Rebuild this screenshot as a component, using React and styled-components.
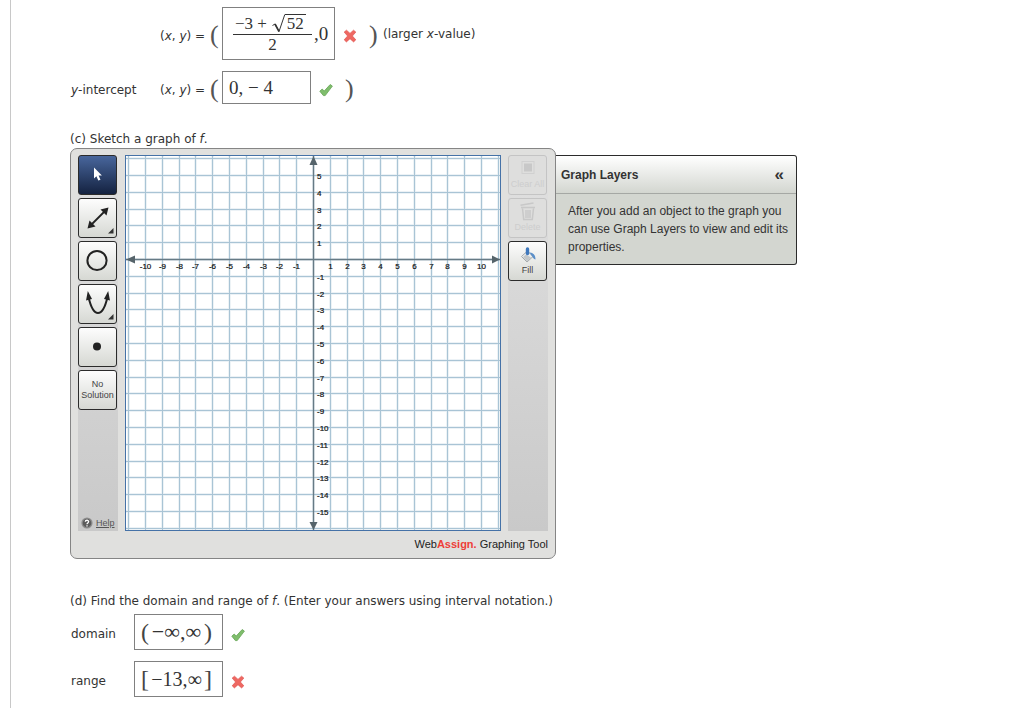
import { useState } from 'react';
import styled, { createGlobalStyle } from 'styled-components';

const GlobalStyle = createGlobalStyle`
  * {
    box-sizing: border-box;
  }

  body {
    margin: 0;
    background: #fff;
    color: #333;
    font-family: 'DejaVu Sans', sans-serif;
    font-size: 12px;
  }
`;

const Page = styled.main`
  min-height: 100vh;
  margin-left: 10px;
  padding: 7px 16px 0 59px;
  border-left: 1px solid #c8c8c8;
`;

const AnswerRow = styled.div`
  display: flex;
  align-items: center;
  padding-left: 1px;
  margin-bottom: ${(props) => props.$gap || 11}px;
`;

const RowLabel = styled.label`
  width: ${(props) => props.$width || 63}px;
  margin-top: 4px;
  flex-shrink: 0;
`;

const Expression = styled.span`
  width: 50px;
  margin-top: 5px;
  flex-shrink: 0;
  white-space: nowrap;
`;

const Paren = styled.span`
  width: 8px;
  margin: 2px 4px 0 0;
  color: #555;
  font-family: 'Liberation Serif', serif;
  font-size: 26px;
  line-height: 30px;
`;

const ClosingParen = styled(Paren)`
  margin: 2px 6px 0 12px;
`;

const MathBox = styled.div`
  display: flex;
  align-items: center;
  justify-content: center;
  width: ${(props) => props.$width || 89}px;
  height: ${(props) => props.$height || 36}px;
  border: 1px solid #808080;
  font-family: 'Liberation Serif', serif;
  font-size: 19px;
`;

const InputBox = styled(MathBox)`
  padding: 0 10px 0 6px;
`;

const MathInput = styled.input`
  flex: 1;
  min-width: 0;
  padding: 0;
  border: 0;
  outline: none;
  background: transparent;
  color: #333;
  font-family: 'Liberation Serif', serif;
  font-size: ${(props) => props.$size || 19}px;
  line-height: 24px;
  text-align: ${(props) => props.$align || 'center'};
`;

const Bracket = styled.span`
  color: #444;
  font-size: 24px;
  line-height: 28px;
`;

const Fraction = styled.span`
  display: flex;
  flex-direction: column;
  align-items: center;
  width: 79px;
  margin: 0 2px 0 4px;
  font-size: 17px;
  line-height: 19px;
`;

const Numerator = styled.span`
  display: flex;
  align-items: center;
  width: 100%;
  padding: 0 0 1px 2px;
  border-bottom: 1px solid #333;
`;

const Radical = styled.svg`
  width: 14px;
  height: 19px;
  margin-left: 4px;
`;

const Radicand = styled.span`
  padding: 0 2px;
  border-top: 1px solid #333;
  line-height: 18px;
`;

const MarkIcon = styled.svg`
  width: 14px;
  height: 14px;
  margin: 5px 0 0 8px;
  flex-shrink: 0;
`;

const Heading = styled.p`
  margin: ${(props) => props.$top || 0}px 0 ${(props) => props.$bottom || 0}px;
  line-height: 18px;
`;

const ToolRow = styled.div`
  display: flex;
  align-items: flex-start;
`;

const Tool = styled.section`
  padding: 6px 7px;
  border: 1px solid #858585;
  border-radius: 7px;
  background: #e0e0de;
  font-family: 'Liberation Sans', sans-serif;
`;

const ToolBody = styled.div`
  display: flex;
  gap: 7px;
`;

const Strip = styled.div`
  display: flex;
  flex-direction: column;
  gap: 3px;
  width: 40px;
  background: linear-gradient(#e0e0e0, #c9c9c9);
`;

const ToolButton = styled.button`
  display: flex;
  flex-direction: column;
  align-items: center;
  justify-content: ${(props) => (props.$caption ? 'flex-end' : 'center')};
  width: 39px;
  height: 40px;
  padding: 0;
  border: 1px solid #2b2b2b;
  border-radius: 3px;
  background: ${(props) =>
    props.$active
      ? 'linear-gradient(#48669c, #142240)'
      : 'linear-gradient(#fdfdfd, #d6d8d3)'};
  color: #444;
  font-family: 'Liberation Sans', sans-serif;
  font-size: 9px;
  line-height: 11px;
  cursor: pointer;

  &:disabled {
    border-color: #c4c4c4;
    background: #dededd;
    color: #cdcdcd;
    cursor: default;
  }
`;

const ToolIcon = styled.svg`
  width: 37px;
  height: 38px;
  display: block;
`;

const CaptionIcon = styled.svg`
  width: 20px;
  height: 20px;
`;

const Caption = styled.span`
  margin-bottom: 4px;
  white-space: nowrap;
`;

const HelpLink = styled.a`
  display: flex;
  align-items: center;
  gap: 3px;
  margin-top: auto;
  padding: 0 0 2px 3px;
  color: #555;
  font-size: 9px;
`;

const Plot = styled.svg`
  display: block;
  width: 376px;
  height: 376px;
  border: 1px solid #4572a7;
  background: #fff;
`;

const ToolFooter = styled.footer`
  padding-top: 5px;
  color: #222;
  font-size: 11px;
  line-height: 16px;
  text-align: right;
`;

const BrandAccent = styled.strong`
  color: #ee3e38;
`;

const Layers = styled.aside`
  width: 241px;
  margin-top: 7px;
  border: 1px solid #2b2b2b;
  border-left: 0;
  border-radius: 0 3px 3px 0;
  background: #d3d6d0;
  font-family: 'Liberation Sans', sans-serif;
`;

const LayersHeader = styled.header`
  display: flex;
  align-items: center;
  justify-content: space-between;
  height: 38px;
  padding: 0 12px 0 5px;
  border-bottom: 1px solid #a5a8a4;
  border-radius: 0 3px 0 0;
  background: linear-gradient(#fff, #d3d6d0);
`;

const LayersTitle = styled.h2`
  margin: 0;
  font-size: 12px;
`;

const CollapseButton = styled.button`
  padding: 0;
  border: 0;
  background: none;
  color: #333;
  font-family: 'Liberation Sans', sans-serif;
  font-size: 17px;
  font-weight: bold;
  line-height: 20px;
  cursor: pointer;
`;

const LayersText = styled.p`
  margin: 0;
  padding: 8px 2px 8px 12px;
  font-size: 12px;
  line-height: 18px;
`;

// plot geometry
const UNIT = 16.8;
const ORIGIN_X = 187.5;
const ORIGIN_Y = 103.5;

const range = (from, to) =>
  Array.from({ length: to - from + 1 }, (_, i) => from + i);
const px = (x) => Math.round(ORIGIN_X + x * UNIT - 0.5) + 0.5;
const py = (y) => Math.round(ORIGIN_Y - y * UNIT - 0.5) + 0.5;

function Mark({ correct }) {
  return correct ? (
    <MarkIcon viewBox="0 0 14 14" role="img" aria-label="correct">
      <path
        d="M.8 8.2 3.2 6l2 2.1L11.2 1.5l2.2 1.6L6.2 12.6H4.4Z"
        fill="#7fbd6c"
        stroke="#65a554"
        strokeWidth="0.8"
        strokeLinejoin="round"
      />
    </MarkIcon>
  ) : (
    <MarkIcon viewBox="0 0 14 14" role="img" aria-label="incorrect">
      <path
        d="M1.2 3.1 3.5 1.2 7 4.4l3.5-3.2 2.3 1.9-3.4 3.9 3.4 3.8-2.2 2.1L7 9.7l-3.6 3.2-2.2-2.1L4.6 7Z"
        fill="#ee6862"
        stroke="#e0524e"
        strokeWidth="0.7"
        strokeLinejoin="round"
      />
    </MarkIcon>
  );
}

function XY() {
  return (
    <Expression>
      (<i>x</i>, <i>y</i>) =
    </Expression>
  );
}

function GridLines(props) {
  return (
    <g {...props}>
      {range(-11, 11).map((x) => (
        <line key={`x${x}`} x1={px(x)} x2={px(x)} y1="0" y2="374" />
      ))}
      {range(-16, 6).map((y) => (
        <line key={`y${y}`} x1="0" x2="374" y1={py(y)} y2={py(y)} />
      ))}
    </g>
  );
}

function Graph() {
  return (
    <Plot viewBox="0 0 374 374" role="img" aria-label="Coordinate plane">
      <GridLines stroke="#e6eef3" strokeWidth="2.4" />
      <GridLines stroke="#a9c4d5" strokeWidth="1" />
      <g stroke="#667a85" strokeWidth="1.4">
        <line x1={px(0)} x2={px(0)} y1="0" y2="374" />
        <line x1="0" x2="374" y1={py(0)} y2={py(0)} />
      </g>
      <g fill="#56646b">
        <path d={`M${px(0)} 0l4 9h-8Z`} />
        <path d={`M${px(0)} 374l4-8h-8Z`} />
        <path d={`M0 ${py(0)}l9-4v8Z`} />
        <path d={`M374 ${py(0)}l-8-4v8Z`} />
      </g>
      <g
        fill="#111"
        fontFamily="'Liberation Sans', sans-serif"
        fontSize="8"
        stroke="#111"
        strokeWidth="0.2"
      >
        {range(-10, 10)
          .filter((x) => x !== 0)
          .map((x) => (
            <text key={x} x={px(x)} y="113" textAnchor="middle">
              {x}
            </text>
          ))}
        {range(-15, 5)
          .filter((y) => y !== 0)
          .map((y) => (
            <text key={y} x="191" y={py(y) + 3}>
              {y}
            </text>
          ))}
      </g>
    </Plot>
  );
}

const corner = <path d="M34.5 29V34.5H29Z" fill="#333" />;

const drawTools = [
  {
    name: 'Select',
    icon: (
      <path
        d="M15 11.5v11l2.4-2.2 1.9 4.3 2.2-.9-1.9-4.3h3.3Z"
        fill="#fff"
      />
    ),
  },
  {
    name: 'Line',
    icon: (
      <>
        <path d="M12 26 26 12" stroke="#222" strokeWidth="1.8" />
        <path d="M8.5 29.5 10.5 21.5 16.5 27.5Z" fill="#222" />
        <path d="M29.5 8.5 21.5 10.5 27.5 16.5Z" fill="#222" />
        {corner}
      </>
    ),
  },
  {
    name: 'Circle',
    icon: (
      <circle cx="18" cy="18.5" r="9.6" fill="none" stroke="#222" strokeWidth="2" />
    ),
  },
  {
    name: 'Parabola',
    icon: (
      <>
        <path
          d="M9.5 12C12 23 15 28 19 28S26 23 28.5 12"
          fill="none"
          stroke="#222"
          strokeWidth="2"
        />
        <path d="M8.8 6 13 14 7 15.5Z" fill="#222" />
        <path d="M29.2 6 31 15.5 25 14Z" fill="#222" />
        {corner}
      </>
    ),
  },
  {
    name: 'Point',
    icon: <circle cx="18" cy="18.5" r="4" fill="#222" />,
  },
];

function GraphingTool() {
  const [tool, setTool] = useState('Select');
  const [open, setOpen] = useState(true);

  return (
    <ToolRow>
      <Tool>
        <ToolBody>
          <Strip>
            {drawTools.map(({ name, icon }) => (
              <ToolButton
                key={name}
                type="button"
                aria-label={name}
                $active={tool === name}
                onClick={() => setTool(name)}
              >
                <ToolIcon viewBox="0 0 37 38">{icon}</ToolIcon>
              </ToolButton>
            ))}
            <ToolButton type="button">
              No
              <br />
              Solution
            </ToolButton>
            <HelpLink href="#help">
              <svg width="12" height="12" viewBox="0 0 12 12">
                <circle cx="6" cy="6" r="5.6" fill="#8e8e8e" />
                <circle cx="6" cy="6" r="4.3" fill="#5c5c5c" />
                <path
                  d="M4.3 4.7C4.4 2.7 7.8 2.8 7.6 4.8 7.5 6 6 5.9 6 7.2M6 8.3V9.4"
                  fill="none"
                  stroke="#fff"
                  strokeWidth="1.3"
                />
              </svg>
              Help
            </HelpLink>
          </Strip>
          <Graph />
          <Strip>
            <ToolButton type="button" disabled $caption>
              <CaptionIcon viewBox="0 0 20 20">
                <rect x="4" y="2.5" width="12" height="12" fill="none" stroke="#d0d0d0" />
                <rect x="6" y="4.5" width="8" height="8" fill="#c8c8c8" />
              </CaptionIcon>
              <Caption>Clear All</Caption>
            </ToolButton>
            <ToolButton type="button" disabled $caption>
              <CaptionIcon viewBox="0 0 20 20">
                <path
                  d="M2.5 3.2 15.5 1M3 5.5h14M4.5 6.5l1.2 11h8.6l1.2-11M8 8v8M10 8v8M12 8v8"
                  fill="none"
                  stroke="#c8c8c8"
                  strokeWidth="1.5"
                />
              </CaptionIcon>
              <Caption>Delete</Caption>
            </ToolButton>
            <ToolButton type="button" $caption>
              <CaptionIcon viewBox="0 0 20 20">
                <path d="M3.5 11.5 9.5 6 15 11.5 9 17Z" fill="#eceeef" stroke="#a4a8aa" />
                <path d="M5 12 8 9.5l5 3-4 4Z" fill="#c3c7c9" />
                <path d="M11.5 7.5c4 0 6 3 6 7-2-.5-2.8-2.5-4-4Z" fill="#5b8fc9" />
                <path d="M9.5 4v4.5" stroke="#3f78bd" strokeWidth="3.4" strokeLinecap="round" />
              </CaptionIcon>
              <Caption>Fill</Caption>
            </ToolButton>
          </Strip>
        </ToolBody>
        <ToolFooter>
          Web<BrandAccent>Assign.</BrandAccent> Graphing Tool
        </ToolFooter>
      </Tool>
      <Layers>
        <LayersHeader>
          <LayersTitle>Graph Layers</LayersTitle>
          <CollapseButton
            type="button"
            aria-label="Toggle graph layers"
            onClick={() => setOpen(!open)}
          >
            «
          </CollapseButton>
        </LayersHeader>
        {open && (
          <LayersText>
            After you add an object to the graph you can use Graph Layers to
            view and edit its properties.
          </LayersText>
        )}
      </Layers>
    </ToolRow>
  );
}

function App() {
  return (
    <>
      <GlobalStyle />
      <Page>
        <AnswerRow>
          <RowLabel as="span" $width={89} />
          <XY />
          <Paren>(</Paren>
          <MathBox
            $width={113}
            $height={53}
            role="textbox"
            aria-label="larger x-value"
            tabIndex={0}
          >
            <Fraction>
              <Numerator>
                −3 +
                <Radical viewBox="0 0 14 19" aria-hidden="true">
                  <path
                    d="M1.5 11.5 4 10 8 17.5 13.8.5"
                    fill="none"
                    stroke="#333"
                    strokeWidth="1"
                  />
                  <path d="M4 10 8 17.5" stroke="#333" strokeWidth="1.6" />
                </Radical>
                <Radicand>52</Radicand>
              </Numerator>
              2
            </Fraction>
            ,0
          </MathBox>
          <Mark />
          <ClosingParen>)</ClosingParen>
          <span>
            (larger <i>x</i>-value)
          </span>
        </AnswerRow>

        <AnswerRow $gap={26}>
          <RowLabel htmlFor="y-intercept" $width={89}>
            <i>y</i>-intercept
          </RowLabel>
          <XY />
          <Paren>(</Paren>
          <InputBox $height={33}>
            <MathInput id="y-intercept" defaultValue="0, − 4" $align="left" />
          </InputBox>
          <Mark correct />
          <ClosingParen>)</ClosingParen>
        </AnswerRow>

        <Heading>
          (c) Sketch a graph of <i>f</i>.
        </Heading>
        <GraphingTool />

        <Heading $top={33} $bottom={4}>
          (d) Find the domain and range of <i>f</i>. (Enter your answers using
          interval notation.)
        </Heading>
        <AnswerRow>
          <RowLabel htmlFor="domain">domain</RowLabel>
          <InputBox>
            <Bracket>(</Bracket>
            <MathInput id="domain" defaultValue="−∞,∞" $size={22} />
            <Bracket>)</Bracket>
          </InputBox>
          <Mark correct />
        </AnswerRow>
        <AnswerRow>
          <RowLabel htmlFor="range">range</RowLabel>
          <InputBox>
            <Bracket>[</Bracket>
            <MathInput id="range" defaultValue="−13,∞" $size={20} />
            <Bracket>]</Bracket>
          </InputBox>
          <Mark />
        </AnswerRow>
      </Page>
    </>
  );
}

export default App;
